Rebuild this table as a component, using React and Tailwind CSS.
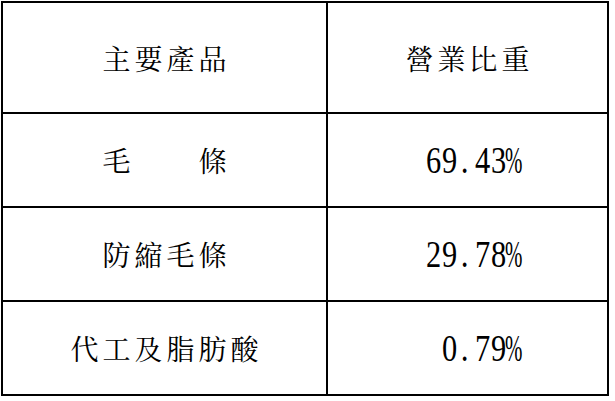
import React from "react";

const cjk = { fontFamily: "'Noto Serif CJK TC','Noto Sans CJK TC','Noto Sans CJK SC',serif" };
const serif = { fontFamily: "'Liberation Serif','Times New Roman',serif" };

function Num({ text }) {
  return (
    <span className="flex items-center text-[38px] leading-none text-black" style={serif}>
      {text.split("").map((c, i) => {
        if (c === ".")
          return (
            <span key={i} className="inline-flex justify-start w-[17px] pl-[3px]">
              <span className="inline-block scale-x-[0.82]">.</span>
            </span>
          );
        if (c === "%")
          return (
            <span key={i} className="inline-flex justify-center w-[16px]">
              <span className="inline-block shrink-0 scale-x-[0.55]">%</span>
            </span>
          );
        return (
          <span key={i} className="inline-flex justify-center w-[16px]">
            <span className="inline-block shrink-0 scale-x-[0.8]">{c}</span>
          </span>
        );
      })}
    </span>
  );
}

function Label({ children }) {
  return (
    <span className="text-[28px] leading-none tracking-[4px] pl-[4px] text-black whitespace-pre" style={cjk}>
      {children}
    </span>
  );
}

function Row({ h, left, right, last, header }) {
  return (
    <div className={`flex ${h} ${last ? "" : "border-b-2 border-black"}`}>
      <div className="w-[325px] border-r-2 border-black flex items-center justify-center">
        <Label>{left}</Label>
      </div>
      <div className={`flex-1 flex items-center ${header ? "justify-center" : "justify-end pr-[85px]"}`}>
        {header ? <Label>{right}</Label> : <Num text={right} />}
      </div>
    </div>
  );
}

export default function App() {
  return (
    <div className="w-[615px] h-[401px] bg-white overflow-hidden">
      <div className="ml-[1px] mt-[1px] w-[608px] border-2 border-black">
        <Row h="h-[111px]" left="主要產品" right="營業比重" header />
        <Row h="h-[94px]" left={"毛\u3000\u3000條"} right="69.43%" />
        <Row h="h-[94px]" left="防縮毛條" right="29.78%" />
        <Row h="h-[92px]" left="代工及脂肪酸" right="0.79%" last />
      </div>
    </div>
  );
}
